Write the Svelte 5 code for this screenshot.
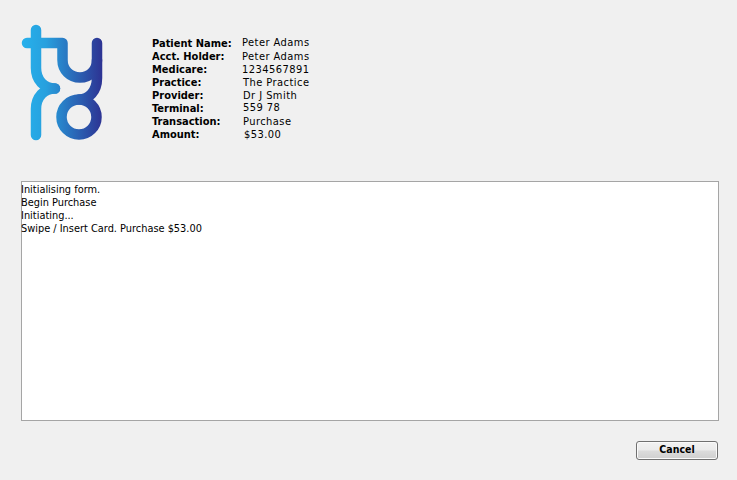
<script>
  const rows = [
    { label: 'Patient Name:', value: 'Peter Adams', indent: 0, lift: 1 },
    { label: 'Acct. Holder:', value: 'Peter Adams', indent: 0, lift: 0 },
    { label: 'Medicare:', value: '1234567891', indent: 0, lift: 0 },
    { label: 'Practice:', value: 'The Practice', indent: 1, lift: 0 },
    { label: 'Provider:', value: 'Dr J Smith', indent: 1, lift: 0 },
    { label: 'Terminal:', value: '559 78', indent: 1, lift: 1 },
    { label: 'Transaction:', value: 'Purchase', indent: 1, lift: 0 },
    { label: 'Amount:', value: '$53.00', indent: 2, lift: 0 }
  ];

  const log = ['Initialising form.', 'Begin Purchase', 'Initiating...', 'Swipe / Insert Card. Purchase $53.00'];
</script>

<div class="window">
  <header class="top">
    <svg class="logo" width="90" height="120" viewBox="20 22 90 120" role="img" aria-label="tyro">
      <defs>
        <linearGradient id="tyro" gradientUnits="userSpaceOnUse" x1="22" y1="0" x2="102" y2="0">
          <stop offset="0" stop-color="#27b1ec" />
          <stop offset="0.3" stop-color="#27a0de" />
          <stop offset="1" stop-color="#2d3393" />
        </linearGradient>
      </defs>
      <g fill="none" stroke="url(#tyro)" stroke-width="10.5" stroke-linecap="round" stroke-linejoin="round">
        <path d="M36 30V68C36 80 44 88.500 55 88.500" />
        <path d="M36 135V109C36 97 44 88.500 55 88.500" />
        <path d="M27 43H62.500V60C62.500 70 70 77.500 80 77.500C90 77.500 97 70 97 60V43" />
        <path d="M97 60V78C97 91 89 99.500 79 99.500" />
        <circle cx="79" cy="117" r="17.500" />
      </g>
    </svg>
    <dl class="details">
      {#each rows as row}
        <div class="row">
          <dt>{row.label}</dt>
          <dd style="padding-left: {row.indent}px; margin-top: {-row.lift}px">{row.value}</dd>
        </div>
      {/each}
    </dl>
  </header>

  <div class="log">
    {#each log as line}
      <div>{line}</div>
    {/each}
  </div>

  <footer class="actions">
    <button type="button">Cancel</button>
  </footer>
</div>

<style>
  :global(body) {
    background: #f0f0f0;
  }

  .window {
    box-sizing: border-box;
    width: 737px;
    height: 480px;
    padding: 22px 18px 0 21px;
    font-family: "DejaVu Sans", sans-serif;
    font-stretch: condensed;
    font-size: 11px;
    color: #000;
    overflow: hidden;
  }

  .top {
    display: flex;
    height: 159px;
  }

  .logo {
    display: block;
    flex: none;
    margin-left: -1px;
  }

  .details {
    margin: 15px 0 0 42px;
  }

  .row {
    display: grid;
    grid-template-columns: 90px auto;
    height: 13px;
    line-height: 13px;
  }

  dt {
    font-weight: bold;
  }

  dd {
    margin: 0;
    letter-spacing: 0.45px;
  }

  .log {
    box-sizing: border-box;
    height: 240px;
    border: 1px solid #a5a5a5;
    background: #fff;
    font-size: 10.9px;
    line-height: 13px;
    padding: 1px 0 0 0;
    text-indent: -1px;
  }

  .actions {
    display: flex;
    justify-content: flex-end;
    margin-top: 20px;
    padding-right: 1px;
  }

  button {
    box-sizing: border-box;
    width: 82px;
    height: 19px;
    padding: 0 0 4px;
    border: 1px solid #707070;
    border-radius: 3px;
    background: linear-gradient(#f2f2f2 0%, #ebebeb 48%, #dcdcdc 52%, #cfcfcf 100%);
    box-shadow: inset 0 0 0 1px #fafafa;
    font: inherit;
    font-size: 10.5px;
    font-stretch: condensed;
    font-weight: bold;
    color: #000;
  }
</style>
